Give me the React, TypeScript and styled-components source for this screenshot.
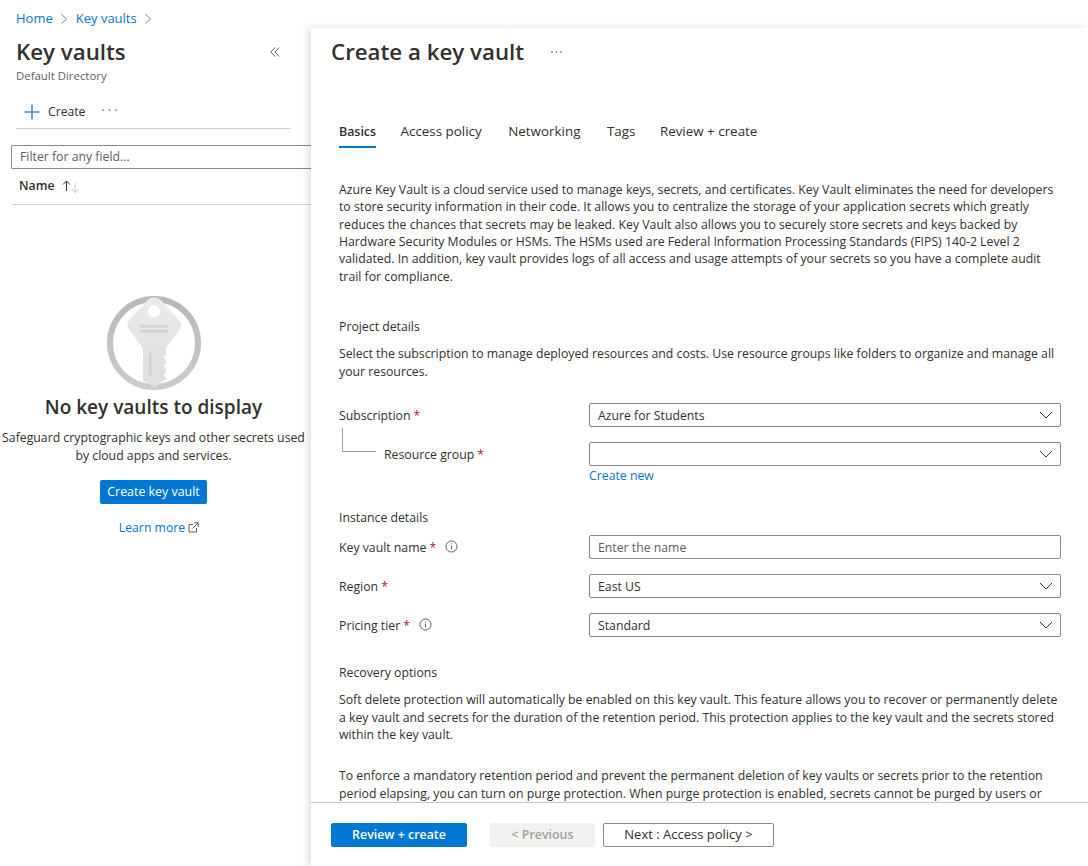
import React from "react";
import styled, { createGlobalStyle } from "styled-components";

const Global = createGlobalStyle`
  html, body { margin: 0; padding: 0; background: #fff; }
  body { font-family: "Open Sans", "Noto Sans", "Liberation Sans", sans-serif; font-size: 12.28px; color: #323130; }
  * { box-sizing: border-box; }
`;
const Page = styled.div`display:flex;width:1088px;height:866px;overflow:hidden;background:#fff;`;
const Left = styled.aside`width:311px;flex:none;display:flex;flex-direction:column;`;
const Crumbs = styled.nav`height:28px;padding:9px 0 0 16px;display:flex;align-items:center;gap:7.5px;font-size:13px;line-height:17px;color:#0078d4;`;
const CrumbSep = styled.svg`width:8px;height:10px;fill:none;stroke:#8a8886;stroke-width:1;`;
const LeftHead = styled.header`padding-left:16px;display:flex;justify-content:space-between;align-items:center;padding-right:31px;`;
const LeftTitle = styled.h1`margin:0;font-size:22.3px;line-height:48px;height:48px;font-weight:600;color:#323130;`;
const Sub = styled.div`padding-left:16px;font-size:11.4px;line-height:16px;height:16px;margin-top:-8px;color:#605e5c;`;
const Toolbar = styled.div`margin:16px 20px 0 16px;height:29px;padding:0 0 5px 8px;border-bottom:1px solid #d2d0ce;display:flex;align-items:center;`;
const CreateLabel = styled.span`margin-left:8px;font-size:12.2px;line-height:16px;`;
const DotsSvg = styled.svg<{ $m: number }>`margin-left:${p => p.$m}px;fill:#605e5c;`;
const Filter = styled.div`margin:16px 0 0 11px;height:24px;border:1px solid #8a8886;border-right:none;border-radius:2px 0 0 2px;padding-left:8px;font-size:12.28px;line-height:22px;color:#605e5c;`;
const ColumnHead = styled.div`margin-left:11px;height:36px;border-bottom:1px solid #d2d0ce;display:flex;align-items:center;padding:0 0 2px 8px;font-weight:600;gap:7px;`;
const Empty = styled.div`display:flex;flex-direction:column;align-items:center;margin-top:89px;width:307px;text-align:center;`;
const EmptyTitle = styled.h2`margin:4px 0 0;font-size:19px;line-height:26px;font-weight:600;color:#323130;`;
const EmptyText = styled.p`margin:9px 0 0;line-height:18px;white-space:nowrap;`;
const PrimarySmall = styled.button`margin-top:15px;height:24px;width:107px;padding:0 0 1px;border:none;border-radius:2px;background:#0078d4;color:#fff;font:inherit;font-size:12.4px;`;
const LearnMore = styled.a`margin:15px 0 0 11px;display:flex;align-items:center;gap:3px;color:#0078d4;line-height:17px;`;

const Right = styled.main`flex:1;margin-top:28px;height:838px;display:flex;flex-direction:column;box-shadow:-3px 0 7px rgba(0,0,0,.13);background:#fff;`;
const Scroll = styled.div`flex:1;min-height:0;overflow:hidden;`;
const RightHead = styled.header`height:48px;padding-left:20px;display:flex;align-items:center;`;
const RightTitle = styled.h1`margin:0;font-size:22.3px;font-weight:600;line-height:48px;color:#323130;`;
const Body = styled.div`padding-left:28px;width:777px;line-height:17.33px;`;
const Tabs = styled.div`margin-top:46px;display:flex;gap:26.5px;padding-top:1px;`;
const Tab = styled.div<{ $on?: boolean; $ml?: number }>`height:25px;border-bottom:2px solid ${p => (p.$on ? "#0078d4" : "transparent")};font-weight:${p => (p.$on ? 600 : 400)};font-size:${p => (p.$on ? "12.4px" : "13.4px")};margin-right:${p => (p.$on ? "-2px" : "0")};margin-left:${p => p.$ml ?? 0}px;white-space:nowrap;`;
const Text = styled.p<{ $m: number }>`margin:${p => p.$m}px 0 -1px;padding-top:1px;white-space:nowrap;`;
const SubHead = styled.h3<{ $m: number }>`margin:${p => p.$m}px 0 -1px;padding-top:1px;font-weight:400;font-size:inherit;line-height:17.33px;`;
const Row = styled.div<{ $m: number }>`margin-top:${p => p.$m}px;display:grid;grid-template-columns:250px 472px;height:24px;`;
const Label = styled.label`display:flex;align-items:center;white-space:nowrap;padding-top:2px;`;
const Req = styled.span`color:#a4262c;margin-left:3px;`;
const Connector = styled.span`align-self:flex-start;width:34px;height:24px;margin:-16px 8px 0 3px;border-left:1px solid #a19f9d;border-bottom:1px solid #a19f9d;`;
const InfoSvg = styled.svg`width:13px;height:13px;margin:-2px 0 0 9px;fill:none;stroke:#605e5c;`;
const Field = styled.div`height:24px;border:1px solid #8a8886;border-radius:2px;padding:1px 8px 0;display:flex;align-items:center;justify-content:space-between;`;
const Placeholder = styled.span`color:#605e5c;`;
const Chevron = styled.svg`width:14px;height:8px;margin:-1px -1px 0 0;fill:none;stroke:#323130;stroke-width:1;`;
const FieldLink = styled.a`display:block;margin-left:250px;padding-top:1px;margin-bottom:-1px;color:#0078d4;`;
const Footer = styled.footer`flex:none;height:64px;border-top:1px solid #c8c6c4;padding:20px 0 0 20px;display:flex;align-items:flex-start;`;
const FooterBtn = styled.button<{ $kind: "primary" | "disabled" | "outline"; $w: number; $ml: number }>`
  width:${p => p.$w}px;margin-left:${p => p.$ml}px;height:24px;padding:0 0 2px;border-radius:2px;font:inherit;font-size:12.4px;font-weight:600;
  background:${p => (p.$kind === "primary" ? "#0078d4" : p.$kind === "disabled" ? "#f3f2f1" : "#fff")};
  color:${p => (p.$kind === "primary" ? "#fff" : p.$kind === "disabled" ? "#a19f9d" : "#323130")};
  border:${p => (p.$kind === "outline" ? "1px solid #8a8886" : "none")};
  ${p => (p.$kind === "outline" ? "font-weight:400;font-size:13px;" : "")}
`;

const Sep = () => <CrumbSep viewBox="0 0 8 10"><path d="M1.5 .5 6.5 5 1.5 9.5" /></CrumbSep>;
const Down = () => <Chevron viewBox="0 0 14 8"><path d="M1 1l6 6 6-6" /></Chevron>;
const Info = () => (
  <InfoSvg viewBox="0 0 13 13">
    <circle cx="6.5" cy="6.500" r="5.5" />
    <path d="M6.5 5.6v3.8M6.5 3.4v1" />
  </InfoSvg>
);
const Dots = ({ m, step, top }: { m: number; step: number; top: number }) => (
  <DotsSvg $m={m} width={step * 2 + 2} height="2" viewBox={`0 0 ${step * 2 + 2} 2`} style={{ marginTop: top }}>
    <circle cx="1" cy="1" r=".85" />
    <circle cx={1 + step} cy="1" r=".85" />
    <circle cx={1 + step * 2} cy="1" r=".85" />
  </DotsSvg>
);

const KeyArt = () => (
  <svg width="96" height="96" viewBox="106 294 96 96" style={{ display: "block" }}>
    <defs>
      <linearGradient id="keyfill" x1="0" y1="0" x2="0" y2="1">
        <stop offset="0" stopColor="#ebebeb" />
        <stop offset="1" stopColor="#dedede" />
      </linearGradient>
      <linearGradient id="ring" x1="0" y1="0" x2="0" y2="1">
        <stop offset="0" stopColor="#b8b8b8" />
        <stop offset="1" stopColor="#cccccc" />
      </linearGradient>
    </defs>
    <circle cx="154" cy="343" r="44" fill="none" stroke="url(#ring)" strokeWidth="6" />
    <path
      fill="url(#keyfill)"
      d="M148 299.500q6-4.500 12 0l19.500 21q3.500 4.500 0 9L166 348v6l-2.500 3 2.500 3v3l-2.500 3 2.500 3v3l-2.500 3 2.500 3v1l-11.500 8.500-11.500-7V348l-14-18.500q-3.500-4.500 0-9z"
    />
    <circle cx="154" cy="311.300" r="6" fill="#fff" />
    <path d="M140 326.300h28M140 331.300h28" stroke="#d4d4d4" strokeWidth="3" />
    <path d="M150.300 353v23" stroke="#d4d4d4" strokeWidth="2.500" />
  </svg>
);

const Plus = () => <svg width="16" height="16" viewBox="0 0 16 16" fill="none" stroke="#0078d4" strokeOpacity=".8" strokeWidth="1.500"><path d="M8 .5v15M.5 8h15" /></svg>;
const Collapse = () => <svg width="10" height="10" viewBox="0 0 10 10" fill="none" stroke="#605e5c" strokeWidth="1"><path d="M5 .5.8 5 5 9.500M9.200 .5 5 5l4.200 4.500" /></svg>;
const Sort = () => (
  <svg width="19" height="13" viewBox="0 0 19 13" fill="none" strokeWidth="1" style={{ marginTop: 1 }}>
    <path d="M4.500 11V1M1 4.500 4.500 1 8 4.500" stroke="#323130" />
    <path d="M13 3v9.500M10 9l3 3.500L16.500 9" stroke="#c8c6c4" />
  </svg>
);
const External = () => <svg width="11" height="11" viewBox="0 0 11 11" fill="none" stroke="#605e5c" strokeWidth="1"><path d="M5 2.500H1v7.500h7.500V6M6 .8h4.200V5M10 1 4.500 6.500" /></svg>;

export default function App() {
  return (
    <Page>
      <Global />
      <Left>
        <Crumbs>
          <span>Home</span><Sep /><span>Key vaults</span><Sep />
        </Crumbs>
        <LeftHead><LeftTitle>Key vaults</LeftTitle><Collapse /></LeftHead>
        <Sub>Default Directory</Sub>
        <Toolbar><Plus /><CreateLabel>Create</CreateLabel><Dots m={17} step={6.5} top={-3} /></Toolbar>
        <Filter>Filter for any field...</Filter>
        <ColumnHead>Name<Sort /></ColumnHead>
        <Empty>
          <KeyArt />
          <EmptyTitle>No key vaults to display</EmptyTitle>
          <EmptyText>Safeguard cryptographic keys and other secrets used<br />by cloud apps and services.</EmptyText>
          <PrimarySmall>Create key vault</PrimarySmall>
          <LearnMore>Learn more <External /></LearnMore>
        </Empty>
      </Left>
      <Right>
        <Scroll>
          <RightHead><RightTitle>Create a key vault</RightTitle><Dots m={27} step={4.5} top={0} /></RightHead>
          <Body>
            <Tabs>
              <Tab $on>Basics</Tab><Tab>Access policy</Tab><Tab>Networking</Tab><Tab>Tags</Tab><Tab $ml={-2}>Review + create</Tab>
            </Tabs>
            <Text $m={32}>
              Azure Key Vault is a cloud service used to manage keys, secrets, and certificates. Key Vault eliminates the need for developers<br />
              to store security information in their code. It allows you to centralize the storage of your application secrets which greatly<br />
              reduces the chances that secrets may be leaked. Key Vault also allows you to securely store secrets and keys backed by<br />
              Hardware Security Modules or HSMs. The HSMs used are Federal Information Processing Standards (FIPS) 140-2 Level 2<br />
              validated. In addition, key vault provides logs of all access and usage attempts of your secrets so you have a complete audit<br />
              trail for compliance.
            </Text>
            <SubHead $m={33}>Project details</SubHead>
            <Text $m={10}>
              Select the subscription to manage deployed resources and costs. Use resource groups like folders to organize and manage all<br />
              your resources.
            </Text>
            <Row $m={24.03}><Label>Subscription<Req>*</Req></Label><Field>Azure for Students<Down /></Field></Row>
            <Row $m={15}><Label><Connector />Resource group<Req>*</Req></Label><Field><span /><Down /></Field></Row>
            <FieldLink>Create new</FieldLink>
            <SubHead $m={24.7}>Instance details</SubHead>
            <Row $m={9.64}><Label>Key vault name<Req>*</Req><Info /></Label><Field><Placeholder>Enter the name</Placeholder></Field></Row>
            <Row $m={15}><Label>Region<Req>*</Req></Label><Field>East US<Down /></Field></Row>
            <Row $m={15}><Label>Pricing tier<Req>*</Req><Info /></Label><Field>Standard<Down /></Field></Row>
            <SubHead $m={26.3}>Recovery options</SubHead>
            <Text $m={9.7}>
              Soft delete protection will automatically be enabled on this key vault. This feature allows you to recover or permanently delete<br />
              a key vault and secrets for the duration of the retention period. This protection applies to the key vault and the secrets stored<br />
              within the key vault.
            </Text>
            <Text $m={24}>
              To enforce a mandatory retention period and prevent the permanent deletion of key vaults or secrets prior to the retention<br />
              period elapsing, you can turn on purge protection. When purge protection is enabled, secrets cannot be purged by users or
            </Text>
          </Body>
        </Scroll>
        <Footer>
          <FooterBtn $kind="primary" $w={136} $ml={0}>Review + create</FooterBtn>
          <FooterBtn $kind="disabled" $w={105} $ml={23}>&lt; Previous</FooterBtn>
          <FooterBtn $kind="outline" $w={171} $ml={8}>Next : Access policy &gt;</FooterBtn>
        </Footer>
      </Right>
    </Page>
  );
}
